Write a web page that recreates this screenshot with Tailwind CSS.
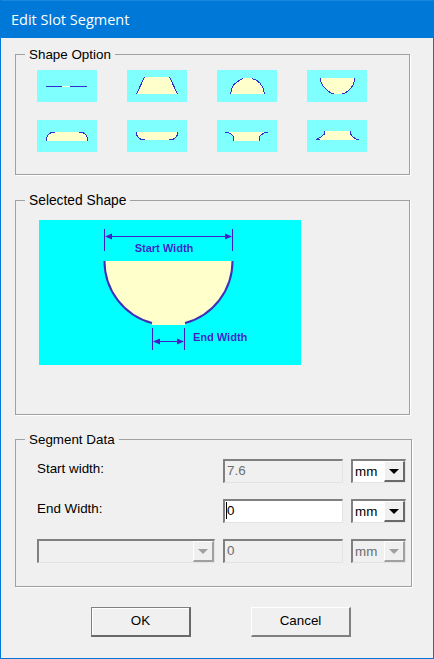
<!DOCTYPE html>
<html lang="en">
<head>
    <meta charset="UTF-8">
    <title>Edit Slot Segment</title>
    <script src="https://cdn.jsdelivr.net/npm/@tailwindcss/browser@4"></script>
</head>
<body class="bg-[#f0f0f0] font-['Liberation_Sans',Arial,sans-serif] text-[13.4px] text-black">
    <div class="w-[434px] h-[659px] border border-[#0078d7] border-t-0 bg-[#f0f0f0] overflow-hidden">
        <!-- title bar -->
        <div class="h-[38px] -mx-px bg-[#0078d7] border-t border-[#1a86dc] pl-[11px] pt-[10px] text-white font-['Open_Sans',sans-serif] text-[14.5px] leading-[18px]">Edit Slot Segment</div>

        <div class="pl-[14px] pt-[9px]">
            <!-- shape options -->
            <fieldset class="w-[395px] h-[128px] border border-[#a0a0a0] shadow-[1px_1px_0_#fff]">
                <legend class="ml-[9px] px-[4px] h-[15px] leading-[15px]">Shape Option</legend>
                <div class="grid grid-cols-[repeat(4,60px)] gap-x-[30px] gap-y-[18px] pl-[21px] pt-[8px]">
                    <svg class="w-[60px] h-[32px] bg-[#80ffff]" viewBox="0 0 60 32" shape-rendering="crispEdges">
                        <path d="M9 16.5H25M33 16.5H50" fill="none" stroke="#3030d0"/>
                        <path d="M25 16.5H33" fill="none" stroke="#ffffcc"/>
                    </svg>
                    <svg class="w-[60px] h-[32px] bg-[#80ffff]" viewBox="0 0 60 32" shape-rendering="crispEdges">
                        <path d="M17.5 7H42.5L50.5 24H9.5Z" fill="#ffffcc"/>
                        <path d="M9.5 24L17.5 7M42.5 7L50.5 24" fill="none" stroke="#3030d0"/>
                    </svg>
                    <svg class="w-[60px] h-[32px] bg-[#80ffff]" viewBox="0 0 60 32" shape-rendering="crispEdges">
                        <path d="M13 24L14.5 20L15 18L16.5 15L20 12L23 10L26 8H35L39 10L43 13L46 18L48 24Z" fill="#ffffcc"/>
                        <path d="M13.5 24L14.5 20L15 18L16.5 15L20 12L23 10L26 8.5M35 8.5L39 10L43 13L46 18L47.5 24" fill="none" stroke="#3030d0"/>
                    </svg>
                    <svg class="w-[60px] h-[32px] bg-[#80ffff]" viewBox="0 0 60 32" shape-rendering="crispEdges">
                        <path d="M13 8L14 12L16 16L18 18L21 21L24 23L27 24H35L38 23L41 21L44 18L46 15L47 12L48 8Z" fill="#ffffcc"/>
                        <path d="M13.5 8L14 12L16 16L18 18L21 21L24 23L27 23.5M35 23.5L38 23L41 21L44 18L46 15L47 12L47.5 8" fill="none" stroke="#3030d0"/>
                    </svg>
                    <svg class="w-[60px] h-[32px] bg-[#80ffff]" viewBox="0 0 60 32" shape-rendering="crispEdges">
                        <path d="M9 21V18L11 15L14 12H46L49 15L51 18V21Z" fill="#ffffcc"/>
                        <path d="M9.5 21V18L11 15L14 12.5H18M42 12.5H46L49 15L50.5 18V21" fill="none" stroke="#3030d0"/>
                    </svg>
                    <svg class="w-[60px] h-[32px] bg-[#80ffff]" viewBox="0 0 60 32" shape-rendering="crispEdges">
                        <path d="M9 12V15L11 17L14 20H46L49 17L51 15V12Z" fill="#ffffcc"/>
                        <path d="M9.5 12V15L11 17L14 19.5H18M42 19.5H46L49 17L50.5 15V12" fill="none" stroke="#3030d0"/>
                    </svg>
                    <svg class="w-[60px] h-[32px] bg-[#80ffff]" viewBox="0 0 60 32" shape-rendering="crispEdges">
                        <path d="M11 12L14 14L16 16V21H42V17L44 15L47 13L49 12Z" fill="#ffffcc"/>
                        <path d="M8 12.5H11L14 14L16 16L16.5 21M42.5 21V17L44 15L47 13L51 12.5" fill="none" stroke="#3030d0"/>
                    </svg>
                    <svg class="w-[60px] h-[32px] bg-[#80ffff]" viewBox="0 0 60 32" shape-rendering="crispEdges">
                        <path d="M17 11V14L14 17L10 20H50L46 17L43 14V11Z" fill="#ffffcc"/>
                        <path d="M17.5 11V14L14 17L10 19L9 19.5H13M43.5 11V14L46 17L49 19L52 19.5" fill="none" stroke="#3030d0"/>
                    </svg>
                </div>
            </fieldset>

            <!-- selected shape -->
            <fieldset class="w-[395px] h-[222px] mt-[18px] border border-[#a0a0a0] shadow-[1px_1px_0_#fff]">
                <legend class="ml-[9px] px-[4px] h-[15px] leading-[15px] text-[13.8px]">Selected Shape</legend>
                <div class="pl-[23px] pt-[12px]">
                    <svg class="w-[262px] h-[145px] bg-[#00ffff]" viewBox="0 0 262 145">
                        <g class="blur-[0.3px]">
                            <path d="M65.5 41H193.5A64 64 0 0 1 146 103V105H113V103A64 64 0 0 1 65.5 41Z" fill="#ffffcc"/>
                            <path d="M113 103A64 64 0 0 1 65.5 41M193.5 41A64 64 0 0 1 146 103" fill="none" stroke="#4030b8" stroke-width="2"/>
                            <path d="M65.5 9V31M193.5 9V31M70 16.5H189M113.5 108V130M145.5 108V130M118 121.5H141" fill="none" stroke="#4020c8" stroke-width="1"/>
                            <path d="M66 16.5L73 13.5V19.5ZM193 16.5L186 13.5V19.5ZM114 121.5L121 118.5V124.5ZM145 121.5L138 118.5V124.5Z" fill="#4020c8"/>
                            <text x="125" y="32" text-anchor="middle" font-size="11" font-weight="700" fill="#4020c8">Start Width</text>
                            <text x="154" y="121" font-size="11" font-weight="700" fill="#4020c8">End Width</text>
                        </g>
                    </svg>
                </div>
            </fieldset>

            <!-- segment data -->
            <fieldset class="w-[397px] h-[155px] mt-[17px] border border-[#a0a0a0] shadow-[1px_1px_0_#fff]">
                <legend class="ml-[9px] px-[4px] h-[15px] leading-[15px]">Segment Data</legend>
                <div class="pl-[21px] pt-[12px] flex flex-col gap-[16px]">
                    <div class="flex items-center h-[24px]">
                        <div class="w-[186px] -mt-[4px]">Start width:</div>
                        <div class="w-[120px] h-[24px] pl-[2px] leading-[19px] text-[#6d6d6d] border-t-2 border-l-2 border-r border-b border-t-[#808080] border-l-[#808080] border-r-[#e3e3e3] border-b-[#e3e3e3]">7.6</div>
                        <div class="ml-[8px] w-[55px] h-[24px] pl-[2px] flex justify-between bg-white leading-[21px] border-t-2 border-l-2 border-r border-b border-t-[#808080] border-l-[#808080] border-r-[#e3e3e3] border-b-[#e3e3e3]">
                            mm
                            <span class="w-[21px] h-full bg-[#f0f0f0] flex items-center justify-center border border-r-2 border-b-2 border-t-white border-l-white border-r-[#696969] border-b-[#696969]"><span class="border-x-[5px] border-x-transparent border-t-[5px] border-t-black"></span></span>
                        </div>
                    </div>
                    <div class="flex items-center h-[24px]">
                        <div class="w-[186px] -mt-[4px]">End Width:</div>
                        <div class="relative w-[120px] h-[24px] pl-[2px] bg-white leading-[19px] border-t-2 border-l-2 border-r border-b border-t-[#808080] border-l-[#808080] border-r-[#e3e3e3] border-b-[#e3e3e3]">0<span class="absolute left-[1px] top-[1px] w-px h-[17px] bg-black"></span></div>
                        <div class="ml-[8px] w-[55px] h-[24px] pl-[2px] flex justify-between bg-white leading-[21px] border-t-2 border-l-2 border-r border-b border-t-[#808080] border-l-[#808080] border-r-[#e3e3e3] border-b-[#e3e3e3]">
                            mm
                            <span class="w-[21px] h-full bg-[#f0f0f0] flex items-center justify-center border border-r-2 border-b-2 border-t-white border-l-white border-r-[#696969] border-b-[#696969]"><span class="border-x-[5px] border-x-transparent border-t-[5px] border-t-black"></span></span>
                        </div>
                    </div>
                    <div class="flex items-center h-[24px]">
                        <div class="w-[178px] h-[24px] flex justify-end border-t-2 border-l-2 border-r border-b border-t-[#808080] border-l-[#808080] border-r-[#e3e3e3] border-b-[#e3e3e3]">
                            <span class="w-[21px] h-full bg-[#f0f0f0] flex items-center justify-center border border-r-2 border-b-2 border-t-white border-l-white border-r-[#a0a0a0] border-b-[#a0a0a0]"><span class="border-x-[5px] border-x-transparent border-t-[5px] border-t-[#a0a0a0]"></span></span>
                        </div>
                        <div class="ml-[8px] w-[120px] h-[24px] pl-[2px] leading-[19px] text-[#6d6d6d] border-t-2 border-l-2 border-r border-b border-t-[#808080] border-l-[#808080] border-r-[#e3e3e3] border-b-[#e3e3e3]">0</div>
                        <div class="ml-[8px] w-[55px] h-[24px] pl-[2px] flex justify-between text-[#6d6d6d] leading-[21px] border-t-2 border-l-2 border-r border-b border-t-[#808080] border-l-[#808080] border-r-[#e3e3e3] border-b-[#e3e3e3]">
                            mm
                            <span class="w-[21px] h-full bg-[#f0f0f0] flex items-center justify-center border border-r-2 border-b-2 border-t-white border-l-white border-r-[#a0a0a0] border-b-[#a0a0a0]"><span class="border-x-[5px] border-x-transparent border-t-[5px] border-t-[#a0a0a0]"></span></span>
                        </div>
                    </div>
                </div>
            </fieldset>

            <!-- buttons -->
            <div class="flex gap-[60px] pl-[76px] mt-[20px]">
                <button class="w-[100px] h-[30px] bg-[#f0f0f0] border border-r-2 border-b-2 border-t-[#808080] border-l-[#808080] border-r-[#696969] border-b-[#696969] shadow-[inset_1px_1px_0_#fff]">OK</button>
                <button class="w-[100px] h-[30px] bg-[#f0f0f0] border border-r-2 border-b-2 border-t-white border-l-white border-r-[#808080] border-b-[#808080]">Cancel</button>
            </div>
        </div>
    </div>
</body>
</html>
